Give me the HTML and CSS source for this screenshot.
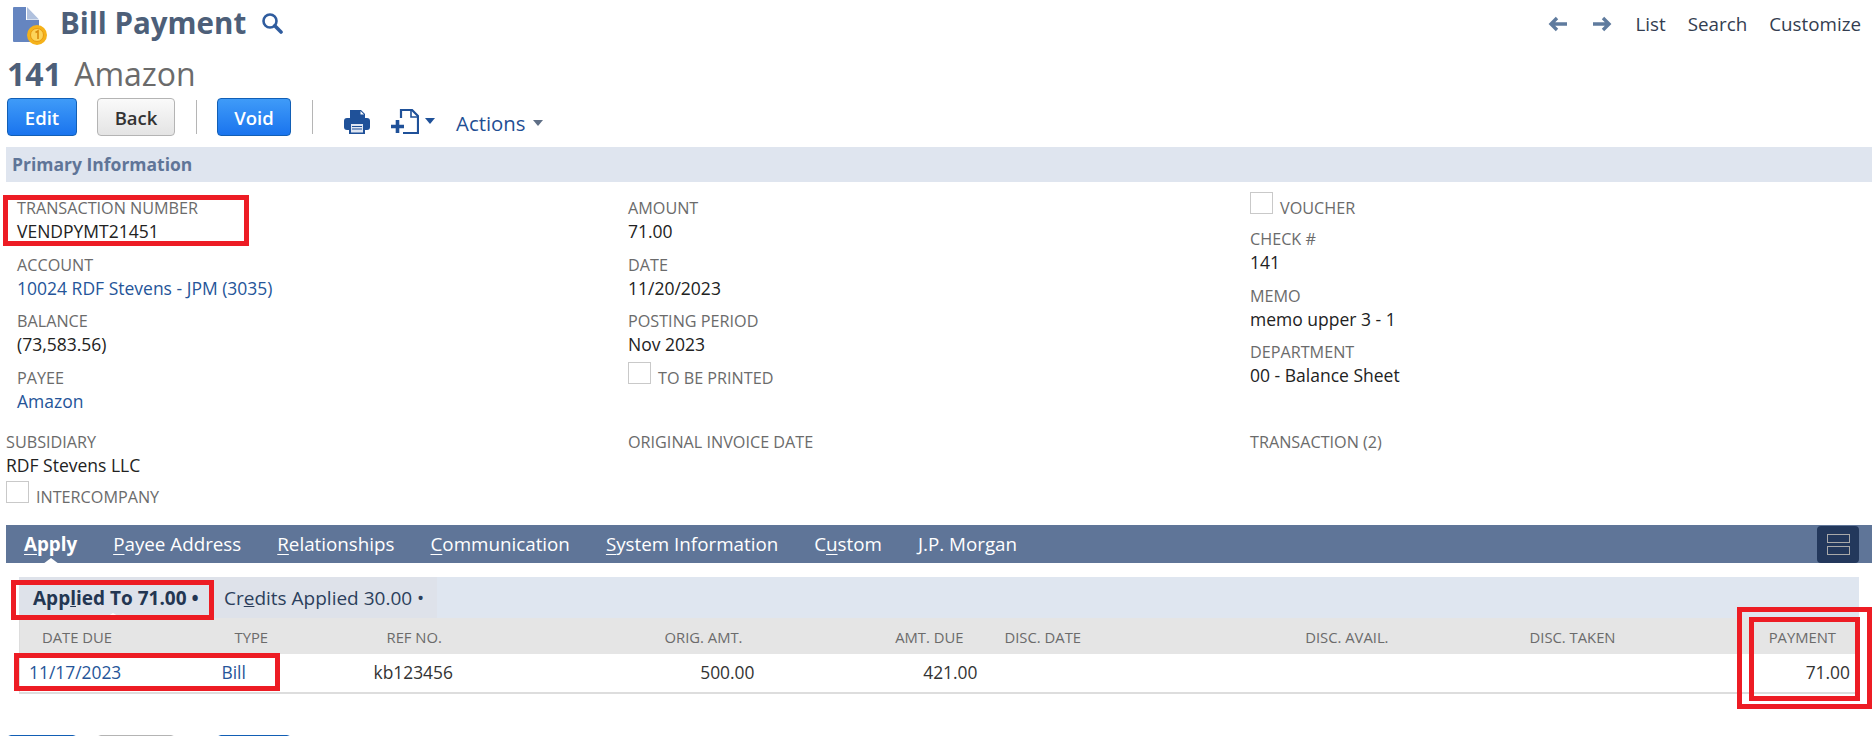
FILE: index.html
```html
<!DOCTYPE html>
<html lang="en">
<head>
  <meta charset="UTF-8">
  <title>Bill Payment</title>
  <link rel="stylesheet" href="styles.css">
</head>
<body>
  <div class="page">
    <header class="title-row">
      <svg class="doc-icon" width="34" height="38" viewBox="0 0 34 38">
        <path d="M0 1a1 1 0 0 1 1-1h12v13h13v22H1a1 1 0 0 1-1-1z" fill="#6585c0"/>
        <path d="M14 0l12 12.500H14z" fill="#b0c1de"/>
        <circle cx="24" cy="28" r="10" fill="#f5b21a"/>
        <circle cx="24" cy="28" r="6.500" fill="#fcd45a" stroke="#e79a10" stroke-width="1"/>
        <path d="M22.500 25.500l2.500-1.500V32" fill="none" stroke="#d98a0c" stroke-width="1.600"/>
      </svg>
      <h1 class="page-title">Bill Payment</h1>
      <svg class="search-icon" width="22" height="22" viewBox="0 0 22 22">
        <circle cx="9" cy="9" r="6.500" fill="none" stroke="#2f5c9e" stroke-width="2.600"/>
        <path d="M13.800 13.800L20 20" stroke="#2f5c9e" stroke-width="3.600" stroke-linecap="round"/>
      </svg>
      <nav class="top-links">
        <svg class="arrow" width="20" height="16" viewBox="0 0 20 16"><path d="M9 2L3 8l6 6M3 8h16" fill="none" stroke="#5f7b9e" stroke-width="3.400"/></svg>
        <svg class="arrow" width="20" height="16" viewBox="0 0 20 16"><path d="M11 2l6 6-6 6M17 8H1" fill="none" stroke="#5f7b9e" stroke-width="3.400"/></svg>
        <a href="#">List</a>
        <a href="#">Search</a>
        <a href="#">Customize</a>
      </nav>
    </header>

    <div class="record-name"><strong>141</strong> Amazon</div>

    <div class="toolbar">
      <button class="btn btn-primary btn-edit">Edit</button>
      <button class="btn btn-back">Back</button>
      <span class="divider"></span>
      <button class="btn btn-primary btn-void">Void</button>
      <span class="divider"></span>
      <svg class="print-icon" width="26" height="26" viewBox="0 0 26 26">
        <path d="M6 1h11l4 4v5H6z" fill="#1f5199"/>
        <path d="M16.500 2v3.500H20" fill="#fff"/>
        <rect x="0" y="9" width="26" height="12" rx="3" fill="#1f5199"/>
        <rect x="5" y="14" width="16" height="11" fill="#1f5199"/>
        <rect x="7" y="15" width="12" height="8.500" fill="#dfe6f2"/>
        <path d="M8 17.500h10M8 20h10" stroke="#1f5199" stroke-width="1"/>
      </svg>
      <svg class="new-icon" width="28" height="26" viewBox="0 0 28 26">
        <path d="M10 9V1h11l6 6v17H12" fill="none" stroke="#1f5199" stroke-width="2.200"/>
        <path d="M20 1v7h7" fill="none" stroke="#1f5199" stroke-width="1.600"/>
        <path d="M6.500 11v13M0 17.500h13" stroke="#1f5199" stroke-width="3.600"/>
      </svg>
      <span class="caret caret-blue"></span>
      <a class="actions" href="#">Actions</a>
      <span class="caret caret-grey"></span>
    </div>

    <div class="section-bar">Primary Information</div>

    <div class="fields">
      <div class="field-col indent">
        <div class="field"><label>TRANSACTION NUMBER</label><div class="value">VENDPYMT21451</div></div>
        <div class="field"><label>ACCOUNT</label><div class="value"><a href="#">10024 RDF Stevens - JPM (3035)</a></div></div>
        <div class="field"><label>BALANCE</label><div class="value">(73,583.56)</div></div>
        <div class="field"><label>PAYEE</label><div class="value"><a href="#">Amazon</a></div></div>
      </div>
      <div class="field-col">
        <div class="field"><label>AMOUNT</label><div class="value">71.00</div></div>
        <div class="field"><label>DATE</label><div class="value">11/20/2023</div></div>
        <div class="field"><label>POSTING PERIOD</label><div class="value">Nov 2023</div></div>
        <div class="check-field check-field-tight"><span class="checkbox"></span><label>TO BE PRINTED</label></div>
      </div>
      <div class="field-col">
        <div class="check-field check-field-top"><span class="checkbox"></span><label>VOUCHER</label></div>
        <div class="field"><label>CHECK #</label><div class="value">141</div></div>
        <div class="field"><label>MEMO</label><div class="value">memo upper 3 - 1</div></div>
        <div class="field"><label>DEPARTMENT</label><div class="value">00 - Balance Sheet</div></div>
      </div>
      <div class="field-col">
        <div class="field field-last"><label>SUBSIDIARY</label><div class="value">RDF Stevens LLC</div></div>
        <div class="check-field check-field-last"><span class="checkbox"></span><label>INTERCOMPANY</label></div>
      </div>
      <div class="field-col">
        <div class="field"><label>ORIGINAL INVOICE DATE</label></div>
      </div>
      <div class="field-col">
        <div class="field"><label>TRANSACTION (2)</label></div>
      </div>
    </div>

    <div class="tab-bar">
      <a class="tab tab-active" href="#"><u>A</u>pply</a>
      <a class="tab" href="#"><u>P</u>ayee Address</a>
      <a class="tab" href="#"><u>R</u>elationships</a>
      <a class="tab" href="#"><u>C</u>ommunication</a>
      <a class="tab" href="#"><u>S</u>ystem Information</a>
      <a class="tab" href="#">C<u>u</u>stom</a>
      <a class="tab" href="#">J.P. Morgan</a>
      <div class="view-toggle">
        <span></span>
        <span></span>
      </div>
    </div>

    <div class="sublist">
      <div class="subtabs">
        <a class="subtab subtab-active" href="#">App<u>l</u>ied To 71.00 •</a>
        <a class="subtab subtab-second" href="#">Cr<u>e</u>dits Applied 30.00 •</a>
      </div>
      <table class="apply-table">
        <colgroup>
          <col class="c-date"><col class="c-type"><col class="c-ref"><col class="c-orig">
          <col class="c-due"><col class="c-disc-date"><col class="c-avail"><col class="c-taken"><col class="c-pay">
        </colgroup>
        <thead>
          <tr>
            <th>DATE DUE</th>
            <th>TYPE</th>
            <th>REF NO.</th>
            <th class="num orig">ORIG. AMT.</th>
            <th class="num due">AMT. DUE</th>
            <th class="disc-date">DISC. DATE</th>
            <th class="num">DISC. AVAIL.</th>
            <th class="num taken">DISC. TAKEN</th>
            <th class="num pay">PAYMENT</th>
          </tr>
        </thead>
        <tbody>
          <tr>
            <td><a href="#">11/17/2023</a></td>
            <td><a href="#">Bill</a></td>
            <td>kb123456</td>
            <td class="num">500.00</td>
            <td class="num">421.00</td>
            <td></td>
            <td></td>
            <td></td>
            <td class="num last">71.00</td>
          </tr>
        </tbody>
      </table>
    </div>

    <!-- only the top edge of the bottom buttons shows in the window -->
    <div class="toolbar toolbar-bottom">
      <button class="btn btn-primary btn-edit"></button>
      <button class="btn btn-back"></button>
      <span class="divider"></span>
      <button class="btn btn-primary btn-void"></button>
    </div>
  </div>

  <!-- red annotation boxes drawn over the screenshot -->
  <div class="mark mark-number"></div>
  <div class="mark mark-applied"></div>
  <div class="mark mark-row"></div>
  <div class="mark mark-pay-inner"></div>
  <div class="mark mark-pay-outer"></div>
</body>
</html>
```

FILE: styles.css
```css
html, body {
  margin: 0;
  height: 736px;
  overflow: hidden;
  background-color: #fff;
}
body {
  position: relative;
  font-family: "Open Sans", Arial, sans-serif;
  font-size: 16px;
  color: #222;
}
a {
  color: #255599;
  text-decoration: none;
}
.page {
  padding: 0 4px 0 6px;
}
.title-row {
  height: 48px;
  display: flex;
  align-items: center;
}
.doc-icon {
  margin: 4px 0 0 7px;
  flex: none;
}
.page-title {
  margin: 0 0 3px 13px;
  font-size: 29.500px;
  font-weight: 700;
  color: #4d5f79;
}
.search-icon {
  margin: 0 0 2px 15px;
}
.top-links {
  margin-left: auto;
  margin-right: 11px;
  display: flex;
  align-items: center;
  gap: 22px;
  font-size: 18.800px;
}
.top-links a {
  color: #333d50;
}
.arrow {
  margin-right: 2px;
}
.record-name {
  height: 48px;
  line-height: 52px;
  padding-left: 1px;
  font-size: 32px;
  color: #6b6b6b;
}
.record-name strong {
  color: #4d5f79;
  margin-right: 4px;
}
.toolbar {
  margin-top: 2px;
  height: 38px;
  display: flex;
  align-items: center;
  padding-left: 1px;
}
.btn {
  height: 38px;
  border-radius: 4px;
  font-family: inherit;
  font-size: 18.500px;
  font-weight: 600;
  padding: 0;
}
.btn-primary {
  color: #fff;
  background: linear-gradient(#3f9bf8, #1a74ee);
  border: 1px solid #125fb5;
}
.btn-edit {
  width: 70px;
}
.btn-void {
  width: 74px;
}
.btn-back {
  width: 78px;
  margin-left: 20px;
  color: #333;
  background: linear-gradient(#fafafa, #e4e4e4);
  border: 1px solid #b4b4b4;
}
.divider {
  width: 1px;
  height: 34px;
  margin: 0 20px 0 21px;
  background-color: #b5b5b5;
}
.print-icon {
  margin: 10px 0 0 11px;
}
.new-icon {
  margin: 9px 0 0 21px;
}
.caret {
  width: 0;
  height: 0;
  border-left: 5px solid transparent;
  border-right: 5px solid transparent;
}
.caret-blue {
  margin: 8px 0 0 6px;
  border-top: 6px solid #1f5199;
}
.caret-grey {
  margin: 12px 0 0 7px;
  border-top: 6px solid #5f6f86;
}
.actions {
  margin: 11px 0 0 21px;
  font-size: 20.400px;
  color: #1f4f94;
}
.section-bar {
  margin-top: 11px;
  height: 35px;
  line-height: 35px;
  padding-left: 6px;
  font-size: 17.500px;
  font-weight: 700;
  color: #5f7598;
  background-color: #dfe5ef;
}
.fields {
  display: grid;
  grid-template-columns: 622px 622px 1fr;
  grid-template-rows: 234px auto;
  padding-top: 15px;
}
.indent {
  padding-left: 11px;
}
.field {
  margin-bottom: 10.500px;
}
.field-last {
  margin-bottom: 0;
}
.field label,
.check-field label {
  display: block;
  line-height: 22px;
  font-size: 16.200px;
  color: #6b6b6b;
}
.value {
  line-height: 24px;
  font-size: 17.500px;
  color: #222;
}
.check-field {
  display: flex;
  align-items: flex-end;
  height: 22px;
}
.check-field label {
  line-height: 18px;
  margin: 0 0 -3px 7px;
}
.check-field-tight {
  margin-top: -4.500px;
}
.check-field-top {
  margin: -5px 0 14px;
}
.check-field-last {
  margin: 4px 0 22px;
}
.checkbox {
  width: 21px;
  height: 20px;
  border: 1px solid #c9c9c9;
  flex: none;
}
.tab-bar {
  position: relative;
  height: 38px;
  display: flex;
  align-items: center;
  gap: 36px;
  padding-left: 18px;
  background-color: #5f7598;
}
.tab {
  position: relative;
  font-size: 18.800px;
  color: #fff;
}
.tab u {
  text-underline-offset: 3px;
}
.tab-active {
  font-weight: 700;
}
.tab-active::after {
  content: "";
  position: absolute;
  left: 50%;
  bottom: -7px;
  margin-left: -8px;
  border-left: 8px solid transparent;
  border-right: 8px solid transparent;
  border-bottom: 6px solid #fff;
}
.view-toggle {
  margin-left: auto;
  margin-right: 13px;
  width: 42px;
  height: 37px;
  border-radius: 4px;
  background-color: #23385c;
  display: flex;
  flex-direction: column;
  align-items: center;
  justify-content: center;
  gap: 3px;
}
.view-toggle span {
  width: 21px;
  height: 7px;
  border: 1px solid #a9a9a9;
}
.sublist {
  margin: 14px 13px 0;
}
.subtabs {
  height: 41px;
  display: flex;
  background-color: #dfe6f0;
}
.subtab {
  position: relative;
  box-sizing: border-box;
  line-height: 43px;
  font-size: 19px;
  color: #2c3f5c;
  background-color: #dee2ea;
}
.subtab-active {
  width: 196px;
  padding-left: 14px;
  font-weight: 700;
  color: #233652;
}
.subtab-active::after {
  content: "";
  position: absolute;
  left: 86px;
  bottom: 0;
  border-left: 8px solid transparent;
  border-right: 8px solid transparent;
  border-bottom: 5px solid #fff;
}
.subtab-second {
  width: 222px;
  padding-left: 9px;
}
.apply-table {
  width: 100%;
  table-layout: fixed;
  border-collapse: collapse;
  border-left: 1px solid #ddd;
  border-bottom: 2px solid #ddd;
}
.c-date { width: 193px; }
.c-type { width: 152px; }
.c-ref { width: 296px; }
.c-orig { width: 105px; }
.c-due { width: 223px; }
.c-disc-date { width: 212px; }
.c-avail { width: 200px; }
.c-taken { width: 225px; }
.apply-table th {
  height: 36px;
  box-sizing: border-box;
  padding: 1px 0 0 22px;
  text-align: left;
  font-size: 14.800px;
  font-weight: 400;
  color: #6b6b6b;
  background-color: #e5e5e5;
  white-space: nowrap;
}
.apply-table td {
  height: 35px;
  padding: 0 0 3px 9px;
  font-size: 17.400px;
  color: #333;
}
.apply-table th.num {
  text-align: right;
  padding: 1px 12px 0 0;
}
.apply-table th.orig {
  padding-right: 23px;
}
.apply-table th.due {
  padding-right: 25px;
}
.apply-table th.taken {
  padding-right: 10px;
}
.apply-table th.pay {
  padding-right: 23px;
}
.apply-table th.disc-date {
  padding-left: 16px;
}
.apply-table td.num {
  text-align: right;
  padding: 0 11px 3px 0;
}
.apply-table td.last {
  padding-right: 9px;
}
.toolbar-bottom {
  margin-top: 41px;
  height: 1px;
  overflow: hidden;
  align-items: flex-start;
}
.toolbar-bottom .divider {
  margin-top: 2px;
}
.mark {
  position: absolute;
  box-sizing: border-box;
  border: 5px solid #ed1c24;
}
.mark-number {
  left: 3px;
  top: 195px;
  width: 246px;
  height: 51px;
}
.mark-applied {
  left: 11px;
  top: 580px;
  width: 203px;
  height: 40px;
}
.mark-row {
  left: 14px;
  top: 653px;
  width: 266px;
  height: 38px;
}
.mark-pay-inner {
  left: 1749px;
  top: 617px;
  width: 111px;
  height: 84px;
}
.mark-pay-outer {
  left: 1737px;
  top: 607px;
  width: 135px;
  height: 102px;
}
```
